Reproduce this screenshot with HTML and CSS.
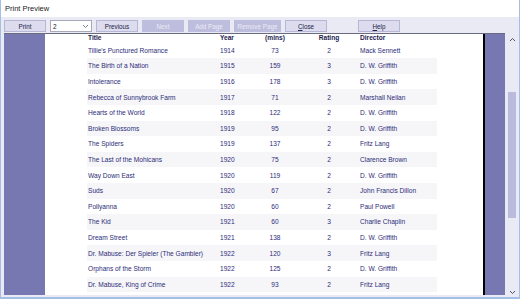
FILE: index.html
```html
<!DOCTYPE html>
<html lang="en">
<head>
    <meta charset="UTF-8">
    <title>Print Preview</title>
    <link rel="stylesheet" href="styles.css">
</head>
<body>
<div class="window">
    <div class="titlebar">Print Preview</div>
    <div class="toolbar">
        <button class="btn">Print</button>
        <div class="combo">
            <span>2</span>
            <svg width="7" height="5" viewBox="0 0 7 5"><path d="M1 1 L3.5 3.5 L6 1" fill="none" stroke="#606070" stroke-width="0.8"/></svg>
        </div>
        <button class="btn">Previous</button>
        <button class="btn" disabled>Next</button>
        <button class="btn" disabled>Add Page</button>
        <button class="btn wide" disabled>Remove Page</button>
        <button class="btn"><u>C</u>lose</button>
        <button class="btn help"><u>H</u>elp</button>
    </div>
    <div class="main">
        <div class="preview">
            <div class="margin-left"></div>
            <div class="page">
                <table class="films">
                    <thead>
                    <tr>
                        <th class="c-title">Title</th>
                        <th class="c-year">Year</th>
                        <th class="c-mins">(mins)</th>
                        <th class="c-rating">Rating</th>
                        <th class="c-dir">Director</th>
                    </tr>
                    </thead>
                    <tbody>
                    <tr><td class="c-title">Tillie's Punctured Romance</td><td class="c-year">1914</td><td class="c-mins">73</td><td class="c-rating">2</td><td class="c-dir">Mack Sennett</td></tr>
                    <tr><td class="c-title">The Birth of a Nation</td><td class="c-year">1915</td><td class="c-mins">159</td><td class="c-rating">3</td><td class="c-dir">D. W. Griffith</td></tr>
                    <tr><td class="c-title">Intolerance</td><td class="c-year">1916</td><td class="c-mins">178</td><td class="c-rating">3</td><td class="c-dir">D. W. Griffith</td></tr>
                    <tr><td class="c-title">Rebecca of Sunnybrook Farm</td><td class="c-year">1917</td><td class="c-mins">71</td><td class="c-rating">2</td><td class="c-dir">Marshall Neilan</td></tr>
                    <tr><td class="c-title">Hearts of the World</td><td class="c-year">1918</td><td class="c-mins">122</td><td class="c-rating">2</td><td class="c-dir">D. W. Griffith</td></tr>
                    <tr><td class="c-title">Broken Blossoms</td><td class="c-year">1919</td><td class="c-mins">95</td><td class="c-rating">2</td><td class="c-dir">D. W. Griffith</td></tr>
                    <tr><td class="c-title">The Spiders</td><td class="c-year">1919</td><td class="c-mins">137</td><td class="c-rating">2</td><td class="c-dir">Fritz Lang</td></tr>
                    <tr><td class="c-title">The Last of the Mohicans</td><td class="c-year">1920</td><td class="c-mins">75</td><td class="c-rating">2</td><td class="c-dir">Clarence Brown</td></tr>
                    <tr><td class="c-title">Way Down East</td><td class="c-year">1920</td><td class="c-mins">119</td><td class="c-rating">2</td><td class="c-dir">D. W. Griffith</td></tr>
                    <tr><td class="c-title">Suds</td><td class="c-year">1920</td><td class="c-mins">67</td><td class="c-rating">2</td><td class="c-dir">John Francis Dillon</td></tr>
                    <tr><td class="c-title">Pollyanna</td><td class="c-year">1920</td><td class="c-mins">60</td><td class="c-rating">2</td><td class="c-dir">Paul Powell</td></tr>
                    <tr><td class="c-title">The Kid</td><td class="c-year">1921</td><td class="c-mins">60</td><td class="c-rating">3</td><td class="c-dir">Charlie Chaplin</td></tr>
                    <tr><td class="c-title">Dream Street</td><td class="c-year">1921</td><td class="c-mins">138</td><td class="c-rating">2</td><td class="c-dir">D. W. Griffith</td></tr>
                    <tr><td class="c-title">Dr. Mabuse: Der Spieler (The Gambler)</td><td class="c-year">1922</td><td class="c-mins">120</td><td class="c-rating">3</td><td class="c-dir">Fritz Lang</td></tr>
                    <tr><td class="c-title">Orphans of the Storm</td><td class="c-year">1922</td><td class="c-mins">125</td><td class="c-rating">2</td><td class="c-dir">D. W. Griffith</td></tr>
                    <tr><td class="c-title">Dr. Mabuse, King of Crime</td><td class="c-year">1922</td><td class="c-mins">93</td><td class="c-rating">2</td><td class="c-dir">Fritz Lang</td></tr>
                    </tbody>
                </table>
            </div>
            <div class="page-shadow"></div>
            <div class="margin-right"></div>
        </div>
        <div class="scrollbar">
            <svg class="arrow" width="7" height="5" viewBox="0 0 7 5"><path d="M1 4 L3.5 1.5 L6 4" fill="none" stroke="#505070" stroke-width="1"/></svg>
            <div class="track"><div class="thumb"></div></div>
            <svg class="arrow" width="7" height="5" viewBox="0 0 7 5"><path d="M1 1 L3.5 3.5 L6 1" fill="none" stroke="#505070" stroke-width="1"/></svg>
        </div>
    </div>
    <div class="bottom-strip"></div>
</div>
</body>
</html>
```

FILE: styles.css
```css
body {
    margin: 0;
    font-family: "Liberation Sans", Arial, sans-serif;
}
.window {
    width: 520px;
    height: 299px;
    box-sizing: border-box;
    border: 1px solid #a4bfe6;
    border-top: none;
    border-bottom-width: 2px;
    background-color: #eaeaf5;
    display: flex;
    flex-direction: column;
    overflow: hidden;
}
.titlebar {
    height: 17px;
    flex: none;
    background-color: #ffffff;
    font-size: 7.5px;
    color: #202020;
    padding-left: 4px;
    line-height: 17px;
}
.toolbar {
    height: 16px;
    flex: none;
    display: flex;
    align-items: center;
    padding-left: 3px;
    gap: 4px;
}
.btn {
    width: 42px;
    height: 12px;
    padding: 0;
    font-family: "Liberation Sans", Arial, sans-serif;
    font-size: 6.3px;
    color: #222244;
    background-color: #dcdcee;
    border: 1px solid #b6b6d6;
    margin-top: 2px;
}
.btn:disabled {
    background-color: #bdbddd;
    border-color: #bdbddd;
    color: #ececf6;
}
.btn.wide {
    width: 47px;
}
.btn.help {
    margin-left: 27px;
}
.combo {
    width: 42px;
    height: 12px;
    box-sizing: border-box;
    margin-top: 2px;
    background-color: #ffffff;
    border: 1px solid #a8a8b8;
    display: flex;
    align-items: center;
    justify-content: space-between;
    padding: 0 2px 0 2px;
    font-size: 6.5px;
    color: #222;
}
.main {
    flex: 1;
    display: flex;
    padding-left: 3px;
    min-height: 0;
}
.preview {
    flex: 1;
    display: flex;
    border-top: 1px solid #6a6a80;
    overflow: hidden;
}
.margin-left {
    width: 41px;
    background-color: #7777b1;
}
.page {
    width: 438px;
    background-color: #ffffff;
    padding-left: 42px;
    box-sizing: border-box;
}
.page-shadow {
    width: 2px;
    background-color: #000000;
}
.margin-right {
    flex: 1;
    background-color: #7777b1;
}
.films {
    border-collapse: collapse;
    font-size: 6.6px;
    color: #2c2c78;
    width: 350px;
}
.films th {
    height: 8.6px;
    padding: 0 0 0 1px;
    font-weight: bold;
    color: #1c1c50;
    line-height: 8px;
}
.films td {
    height: 15.6px;
    padding: 0 0 0 1px;
}
.films tbody tr:nth-child(even) {
    background-color: #f6f6f8;
}
.c-title {
    width: 131px;
    text-align: left;
}
.c-year {
    width: 31px;
    text-align: left;
}
.c-mins {
    width: 46px;
    text-align: center;
}
.c-rating {
    width: 60px;
    text-align: center;
}
.c-dir {
    text-align: left;
}
.scrollbar {
    width: 14px;
    display: flex;
    flex-direction: column;
    align-items: center;
    padding-top: 4px;
    box-sizing: border-box;
}
.arrow {
    flex: none;
}
.track {
    flex: 1;
    width: 100%;
    display: flex;
    justify-content: center;
    padding-top: 50px;
    padding-bottom: 72px;
    box-sizing: border-box;
}
.thumb {
    width: 8px;
    background-color: #babadc;
}
.bottom-strip {
    height: 2px;
    flex: none;
}
```
